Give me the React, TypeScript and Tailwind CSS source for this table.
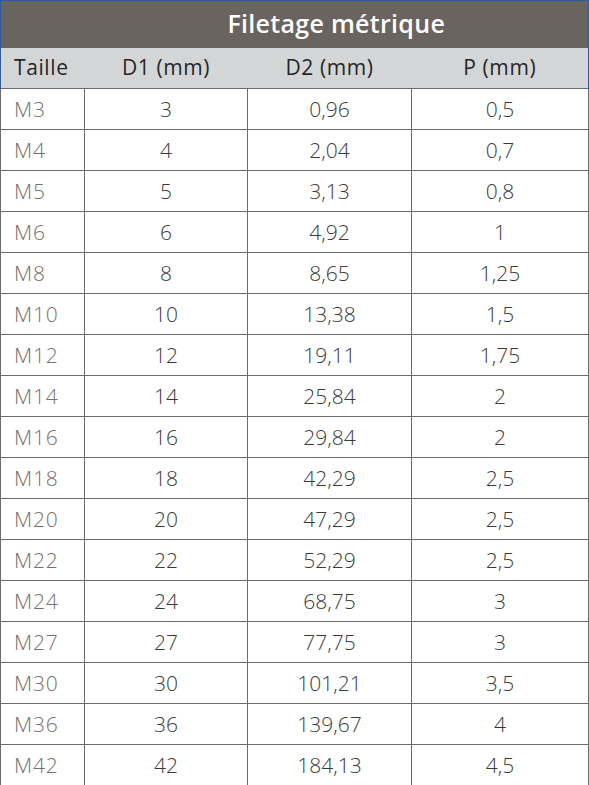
const rows: [string, string, string, string][] = [
  ["M3", "3", "0,96", "0,5"],
  ["M4", "4", "2,04", "0,7"],
  ["M5", "5", "3,13", "0,8"],
  ["M6", "6", "4,92", "1"],
  ["M8", "8", "8,65", "1,25"],
  ["M10", "10", "13,38", "1,5"],
  ["M12", "12", "19,11", "1,75"],
  ["M14", "14", "25,84", "2"],
  ["M16", "16", "29,84", "2"],
  ["M18", "18", "42,29", "2,5"],
  ["M20", "20", "47,29", "2,5"],
  ["M22", "22", "52,29", "2,5"],
  ["M24", "24", "68,75", "3"],
  ["M27", "27", "77,75", "3"],
  ["M30", "30", "101,21", "3,5"],
  ["M36", "36", "139,67", "4"],
  ["M42", "42", "184,13", "4,5"],
];

export default function App() {
  return (
    <div className="w-[589px] h-[785px] bg-white overflow-hidden font-['Open_Sans',sans-serif]">
      <table className="w-[588px] table-fixed border-collapse">
        <colgroup>
          <col className="w-[84px]" />
          <col className="w-[163px]" />
          <col className="w-[164px]" />
          <col className="w-[177px]" />
        </colgroup>
        <thead>
          <tr className="h-[47px] bg-[#6a6461]">
            <td className="border-t border-l border-[#2c5a9c]" />
            <th
              colSpan={3}
              className="border-t border-r border-[#2c5a9c] text-white text-[25px] tracking-[0.3px] font-semibold text-center pb-[2px]"
            >
              Filetage métrique
            </th>
          </tr>
          <tr className="h-[41px] bg-[#d4d5d7] text-[21px] tracking-[0.6px] text-[#262626]">
            <th className="border-l border-[#2c5a9c] text-left pl-[13px] font-normal">Taille</th>
            <th className="font-normal">D1 (mm)</th>
            <th className="font-normal">D2 (mm)</th>
            <th className="border-r border-[#2c5a9c] font-normal">P (mm)</th>
          </tr>
        </thead>
        <tbody className="text-[21px] font-light">
          {rows.map((r) => (
            <tr key={r[0]} className="h-[41px]">
              <td className="border border-[#6b6b6b] pl-[13px] pt-[2px] tracking-[0.8px] text-[#7a706b]">{r[0]}</td>
              <td className="border border-[#6b6b6b] pt-[2px] text-center text-[#3a3a3a]">{r[1]}</td>
              <td className="border border-[#6b6b6b] pt-[2px] text-center text-[#3a3a3a]">{r[2]}</td>
              <td className="border border-[#6b6b6b] pt-[2px] text-center text-[#3a3a3a]">{r[3]}</td>
            </tr>
          ))}
        </tbody>
      </table>
    </div>
  );
}
